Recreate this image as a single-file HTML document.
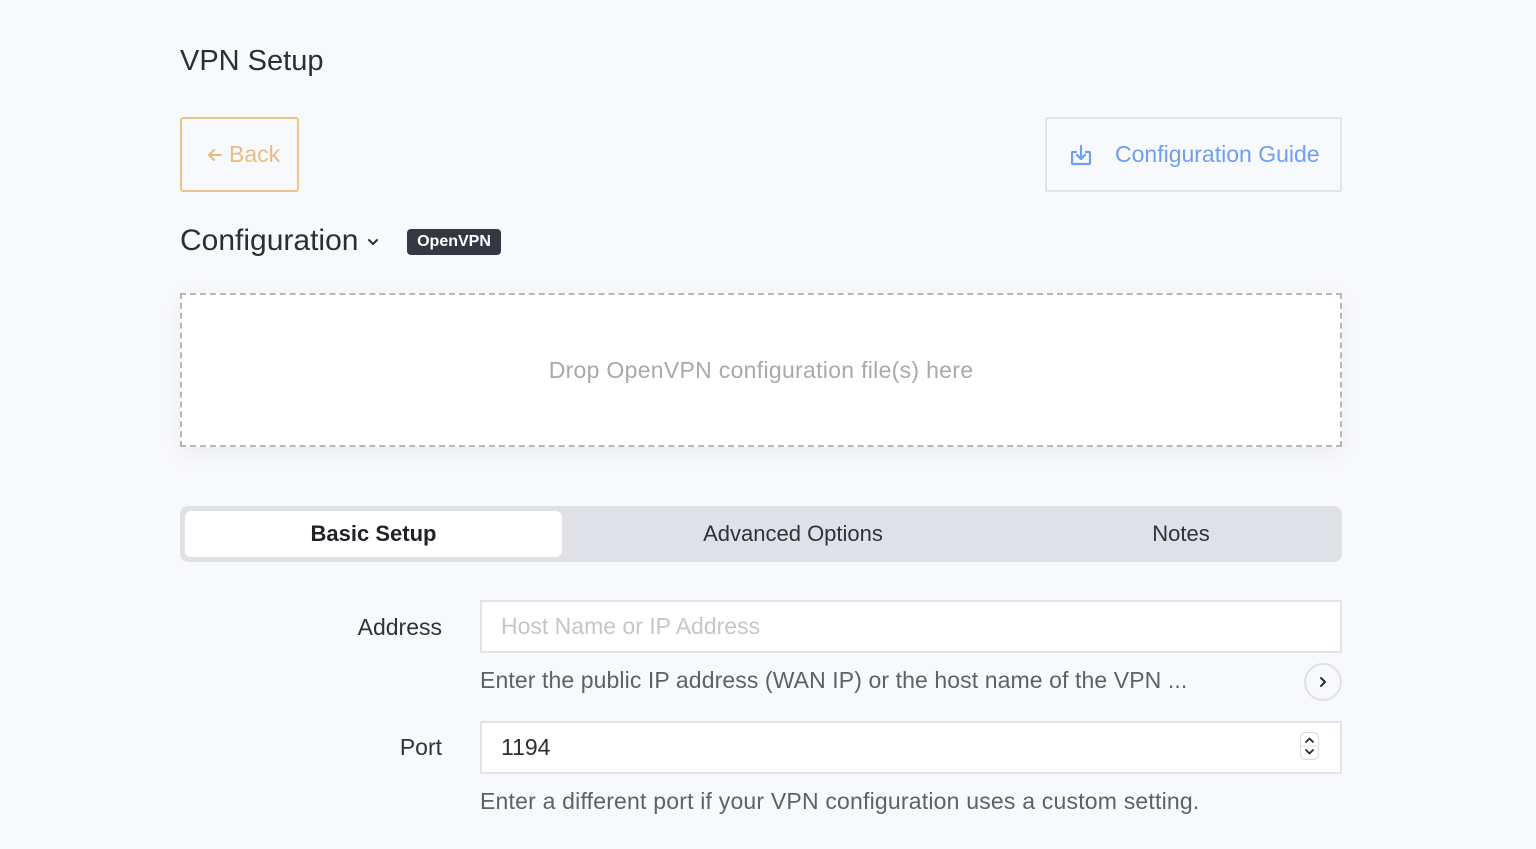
<!DOCTYPE html>
<html><head><meta charset="utf-8"><style>
*{box-sizing:border-box;margin:0;padding:0}
body{width:1536px;height:849px;overflow:hidden;background:#f8f9fd;font-family:"Liberation Sans",sans-serif;position:relative;color:#2f3238}
.a{position:absolute}
</style></head><body>
<div class="a" style="left:180px;top:45px;font-size:29px;color:#2b2e33">VPN Setup</div>
<div class="a" style="left:180px;top:117px;width:119px;height:75px;border:2px solid #edc487;border-radius:3px;color:#e9bc7c;font-size:23px;line-height:71px;padding-left:47px">Back
<svg class="a" style="left:24px;top:27px" width="18" height="18" viewBox="0 0 18 18" fill="none" stroke="#e9bc7c" stroke-width="2" stroke-linecap="round" stroke-linejoin="round"><path d="M15 9H3M8 4L3 9l5 5"/></svg></div>
<div class="a" style="left:1045px;top:117px;width:297px;height:75px;border:2px solid #e2e4e9;border-radius:2px;color:#6f9ff0;font-size:23px;line-height:71px;padding-left:68px;white-space:nowrap">Configuration Guide
<svg class="a" style="left:21px;top:23px" width="26" height="26" viewBox="0 0 26 26" fill="none" stroke="#6f9ff0" stroke-width="2.2" stroke-linecap="round" stroke-linejoin="round"><path d="M8 10H5q-1 0-1 1v10q0 1 1 1h16q1 0 1-1V11q0-1-1-1h-3M13 4v13M9 13l4 4 4-4"/></svg></div>
<div class="a" style="left:180px;top:224px;font-size:30px;color:#2b2e33">Configuration</div>
<svg class="a" style="left:366px;top:236px" width="14" height="12" viewBox="0 0 14 12" fill="none" stroke="#2b2e33" stroke-width="2" stroke-linecap="round" stroke-linejoin="round"><path d="M3 4l4 4 4-4"/></svg>
<div class="a" style="left:407px;top:229px;width:94px;height:26px;background:#333843;border-radius:4px;color:#fff;font-size:16px;font-weight:bold;text-align:center;line-height:26px">OpenVPN</div>
<div class="a" style="left:180px;top:293px;width:1162px;height:154px;border:2px dashed #b5b7bb;background:#fff;color:#a7a9ad;font-size:23px;text-align:center;line-height:150px;box-shadow:0 6px 20px rgba(0,0,0,.05);letter-spacing:.3px">Drop OpenVPN configuration file(s) here</div>
<div class="a" style="left:180px;top:506px;width:1162px;height:56px;background:#dfe1e6;border-radius:8px"></div>
<div class="a" style="left:185px;top:511px;width:377px;height:46px;background:#fff;border-radius:6px;font-weight:bold;font-size:22px;text-align:center;line-height:46px;color:#1f2227">Basic Setup</div>
<div class="a" style="left:580px;top:511px;width:426px;height:46px;font-size:22px;text-align:center;line-height:46px">Advanced Options</div>
<div class="a" style="left:1020px;top:511px;width:322px;height:46px;font-size:22px;text-align:center;line-height:46px">Notes</div>
<div class="a" style="left:300px;top:614px;width:142px;text-align:right;font-size:23px">Address</div>
<div class="a" style="left:480px;top:600px;width:862px;height:53px;border:2px solid #e2e4e9;background:#fff;font-size:23px;color:#c4c6ca;line-height:49px;padding-left:19px">Host Name or IP Address</div>
<div class="a" style="left:480px;top:667px;font-size:23px;color:#5e6168;letter-spacing:.1px">Enter the public IP address (WAN IP) or the host name of the VPN ...</div>
<div class="a" style="left:1304px;top:663px;width:38px;height:38px;border:2px solid #e0e2e6;border-radius:50%"></div>
<svg class="a" style="left:1316px;top:675px" width="14" height="14" viewBox="0 0 14 14" fill="none" stroke="#2b2e33" stroke-width="2" stroke-linecap="round" stroke-linejoin="round"><path d="M5 3l4 4-4 4"/></svg>
<div class="a" style="left:300px;top:734px;width:142px;text-align:right;font-size:23px">Port</div>
<div class="a" style="left:480px;top:721px;width:862px;height:53px;border:2px solid #e2e4e9;background:#fff;font-size:23px;line-height:49px;padding-left:19px;color:#2b2e33">1194
<div class="a" style="left:818px;top:9px;width:19px;height:28px;border:1px solid #d8dade;border-radius:6px"></div>
<svg class="a" style="left:818px;top:9px" width="19" height="28" viewBox="0 0 19 28" fill="none" stroke="#2b2e33" stroke-width="1.8" stroke-linecap="round" stroke-linejoin="round"><path d="M6 10l3.5-3.5L13 10M6 18l3.5 3.5L13 18"/><path d="M2 14h15" stroke="#e0e2e6" stroke-width="1"/></svg></div>
<div class="a" style="left:480px;top:788px;font-size:23px;color:#5e6168;letter-spacing:.2px">Enter a different port if your VPN configuration uses a custom setting.</div>
</body></html>
